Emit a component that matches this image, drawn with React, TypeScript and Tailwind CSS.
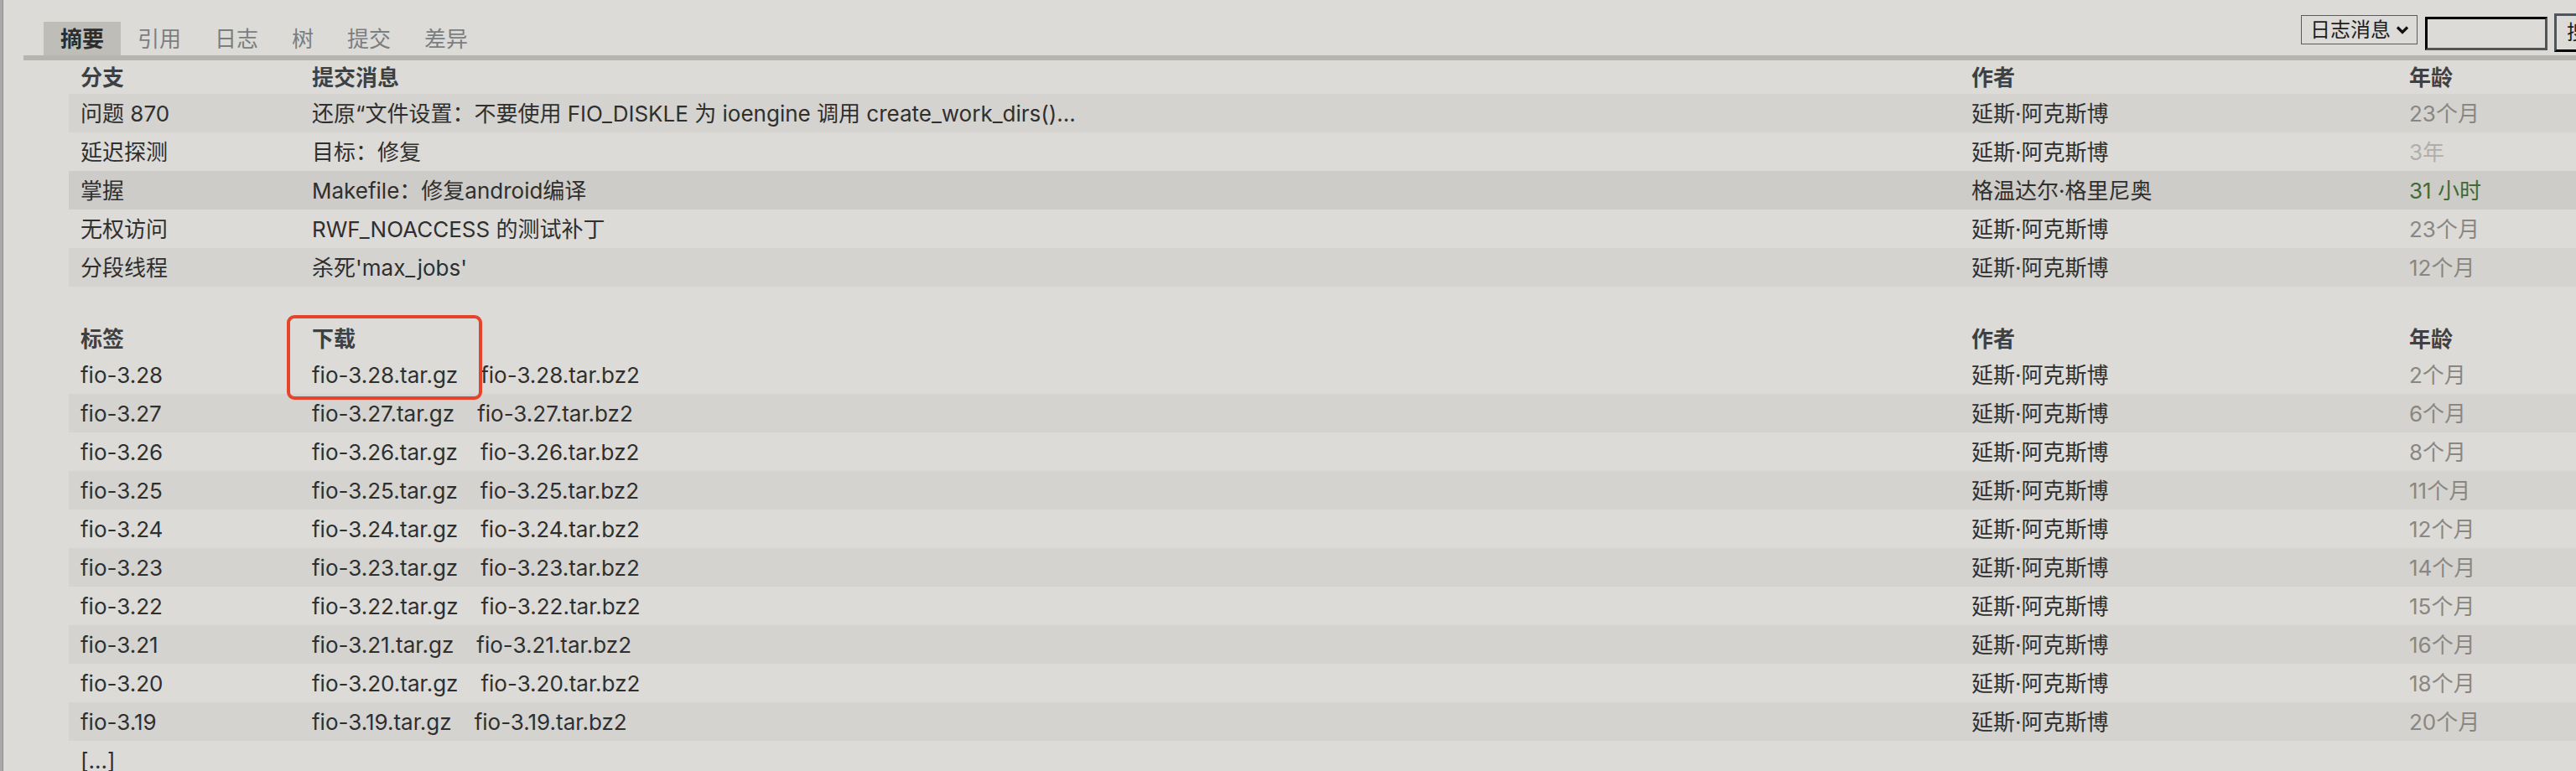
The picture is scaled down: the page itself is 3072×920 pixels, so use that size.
import React from "react";

const FONT = { fontFamily: 'Inter, "Noto Sans CJK SC", "Noto Sans", sans-serif' };

type Branch = { name: string; msg: string; author: string; age: string; ageCls: string; bg: string };

const branches: Branch[] = [
  { name: "问题 870", msg: "还原“文件设置：不要使用 FIO_DISKLE 为 ioengine 调用 create_work_dirs()...", author: "延斯·阿克斯博", age: "23个月", ageCls: "text-[#8a8782]", bg: "bg-[#d4d3cf]" },
  { name: "延迟探测", msg: "目标：修复", author: "延斯·阿克斯博", age: "3年", ageCls: "text-[#b0aeaa]", bg: "" },
  { name: "掌握", msg: "Makefile：修复android编译", author: "格温达尔·格里尼奥", age: "31 小时", ageCls: "text-[#3f6b36]", bg: "bg-[#cdccc8]" },
  { name: "无权访问", msg: "RWF_NOACCESS 的测试补丁", author: "延斯·阿克斯博", age: "23个月", ageCls: "text-[#8a8782]", bg: "" },
  { name: "分段线程", msg: "杀死'max_jobs'", author: "延斯·阿克斯博", age: "12个月", ageCls: "text-[#8a8782]", bg: "bg-[#d4d3cf]" },
];

const tags = [
  { v: "3.28", age: "2个月" },
  { v: "3.27", age: "6个月" },
  { v: "3.26", age: "8个月" },
  { v: "3.25", age: "11个月" },
  { v: "3.24", age: "12个月" },
  { v: "3.23", age: "14个月" },
  { v: "3.22", age: "15个月" },
  { v: "3.21", age: "16个月" },
  { v: "3.20", age: "18个月" },
  { v: "3.19", age: "20个月" },
];

const GRID = "grid grid-cols-[276px_1979px_522px_1fr]";
const CELL = "pl-[14px] flex items-center whitespace-nowrap";

function HeaderRow({ cols }: { cols: string[] }) {
  return (
    <div className={`${GRID} h-[40px] font-bold text-[#3e4144]`}>
      {cols.map((c, i) => (
        <div key={i} className={CELL}>{c}</div>
      ))}
    </div>
  );
}

export default function App() {
  const tabs = ["摘要", "引用", "日志", "树", "提交", "差异"];
  return (
    <div className="w-screen h-[920px] overflow-hidden bg-[#dcdbd7]" style={FONT}>
      <div className="relative flex w-[3124px] h-[920px] text-[26px] text-[#2f2f2f]">
        <div className="w-[3px] shrink-0 bg-[#a9a9a9]" />
        <div className="w-[1px] shrink-0 bg-[#8e8e8e]" />
        <div className="flex-1 min-w-0">
          {/* header / tabs */}
          <div className="ml-[24px] h-[72px] flex justify-between border-b-[6px] border-[#b7b5b0]">
            <div className="flex items-end pl-[24px]">
              {tabs.map((t, i) => (
                <div
                  key={t}
                  className={
                    i === 0
                      ? "h-[40px] px-[20px] flex items-center bg-[#bfbdb8] font-bold text-[#2c2c2c]"
                      : "h-[40px] px-[20px] flex items-center text-[#7b7e81]"
                  }
                >
                  {t}
                </div>
              ))}
            </div>
            <div className="flex items-start mt-[16px] text-[24px] text-[#1e1e1e]">
              <div className="mt-[2px] w-[139px] h-[35px] border border-[#5b5b5b] flex items-center pl-[10px]">
                <span className="leading-none">日志消息</span>
                <svg width="16" height="12" viewBox="0 0 16 12" className="ml-[6px]">
                  <path d="M2 2.5 L8 8.5 L14 2.5" fill="none" stroke="#111" strokeWidth="3.2" />
                </svg>
              </div>
              <div className="ml-[9px] mt-[4px] w-[146px] h-[40px] border-[3px] border-t-black border-l-black border-r-[#50555a] border-b-[#50555a]" />
              <div className="ml-[8px] h-[46px] border-[3px] border-t-[#50555a] border-l-[#50555a] border-r-black border-b-black px-[12px] flex items-center leading-none">
                搜索
              </div>
            </div>
          </div>

          {/* tables */}
          <div className="ml-[78px]">
            <HeaderRow cols={["分支", "提交消息", "作者", "年龄"]} />
            {branches.map((b) => (
              <div key={b.name} className={`${GRID} h-[46px] ${b.bg}`}>
                <div className={CELL}>{b.name}</div>
                <div className={CELL}>{b.msg}</div>
                <div className={CELL}>{b.author}</div>
                <div className={`${CELL} ${b.ageCls}`}>{b.age}</div>
              </div>
            ))}
            <div className="h-[42px]" />
            <HeaderRow cols={["标签", "下载", "作者", "年龄"]} />
            {tags.map((t, i) => (
              <div key={t.v} className={`${GRID} h-[46px] ${i % 2 === 1 ? "bg-[#d4d3cf]" : ""}`}>
                <div className={CELL}>fio-{t.v}</div>
                <div className={`${CELL} gap-[27px]`}>
                  <span>fio-{t.v}.tar.gz</span>
                  <span>fio-{t.v}.tar.bz2</span>
                </div>
                <div className={CELL}>延斯·阿克斯博</div>
                <div className={`${CELL} text-[#8a8782]`}>{t.age}</div>
              </div>
            ))}
            <div className="h-[46px] flex items-center pl-[14px]">[...]</div>
          </div>
        </div>

        {/* annotation box */}
        <div className="absolute left-[342px] top-[376px] w-[233px] h-[101px] border-[4px] border-[#e6432b] rounded-[9px] pointer-events-none" />
      </div>
    </div>
  );
}
